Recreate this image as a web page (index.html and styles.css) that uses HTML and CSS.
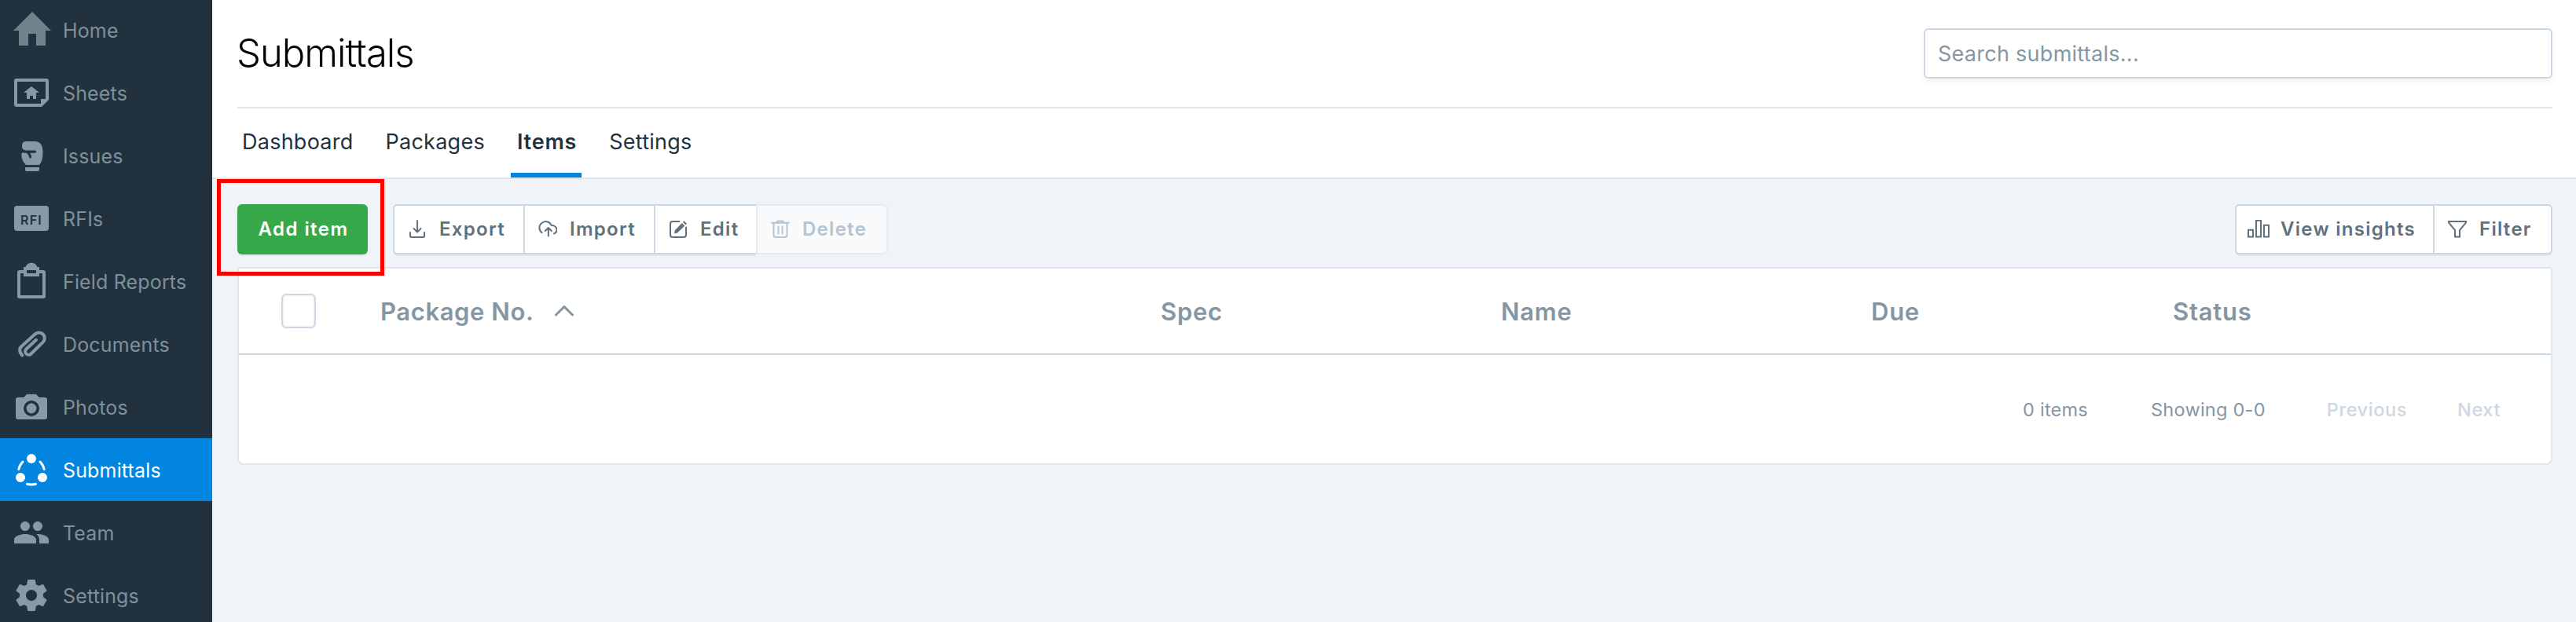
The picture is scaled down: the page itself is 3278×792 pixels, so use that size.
FILE: index.html
```html
<!DOCTYPE html>
<html lang="en">

<head>
    <meta charset="UTF-8">
    <meta name="viewport" content="width=device-width, initial-scale=1.0">
    <title>Submittals</title>
    <link rel="stylesheet" href="styles.css">
</head>

<body>
    <div class="app">
        <nav class="sidebar">
            <a class="nav-item">
                <svg class="nav-icon home-icon" viewBox="0 0 48 48"><path d="M25 1l24 24h-7v19H30V29H20v15H8V25H1z"/></svg>
                <span>Home</span>
            </a>
            <a class="nav-item">
                <svg class="nav-icon" viewBox="0 0 48 48">
                    <path fill-rule="evenodd" d="M5 6h38a3 3 0 0 1 3 3v24l-9 9H5a3 3 0 0 1-3-3V9a3 3 0 0 1 3-3zM6 10v28h30v-6h6V10z"/>
                    <path d="M24 16l10 8h-4v8h-4v-4h-4v4h-4v-8h-4z"/>
                </svg>
                <span>Sheets</span>
            </a>
            <a class="nav-item">
                <svg class="nav-icon" viewBox="0 0 48 48">
                    <path d="M17 6h11c7.5 0 10.5 5 10.5 14 0 6-1 12-4.500 16H17c-4-4-5.700-8.500-5.700-13 0-2 1-3.300 3-3.300h15v-2H18c-4 0-6-2-6-5.700C12 8 14 6 17 6z"/>
                    <path class="cut" d="M14.500 19.200h14M19.500 20.500c2 1.300 3 3 3 5.500"/>
                    <path d="M16 39h18v3a2 2 0 0 1-2 2H18a2 2 0 0 1-2-2z"/>
                </svg>
                <span>Issues</span>
            </a>
            <a class="nav-item">
                <span class="nav-icon"><span class="rfi-badge">RFI</span></span>
                <span>RFIs</span>
            </a>
            <a class="nav-item">
                <svg class="nav-icon" viewBox="0 0 48 48">
                    <path fill-rule="evenodd" d="M14 10V6h2.500a8 8 0 0 1 15 0H34v4h5a3 3 0 0 1 3 3v30a3 3 0 0 1-3 3H9a3 3 0 0 1-3-3V13a3 3 0 0 1 3-3zM10 14v28h28V14h-4v4H14v-4zM18 10v4h12v-4z"/>
                </svg>
                <span>Field Reports</span>
            </a>
            <a class="nav-item">
                <svg class="nav-icon" viewBox="0 0 48 48">
                    <path class="line" d="M12.300 38.500C8 34 8.500 29 12 26.500L28.500 11.500A7.200 7.200 0 0 1 38.700 21.700L23.500 36.500A4.300 4.300 0 0 1 17.300 30.500L30 18.800"/>
                </svg>
                <span>Documents</span>
            </a>
            <a class="nav-item">
                <svg class="nav-icon" viewBox="0 0 48 48">
                    <path fill-rule="evenodd" d="M7 12h7.500l3.500-4h12l3.500 4H41a3 3 0 0 1 3 3v22a3 3 0 0 1-3 3H7a3 3 0 0 1-3-3V15a3 3 0 0 1 3-3zM24 16a10 10 0 1 0 0 20a10 10 0 1 0 0-20z"/>
                    <circle cx="24" cy="26" r="6.4"/>
                </svg>
                <span>Photos</span>
            </a>
            <a class="nav-item active">
                <svg class="nav-icon" viewBox="0 0 48 48">
                    <circle cx="24" cy="10" r="6"/>
                    <circle cx="10" cy="34" r="6"/>
                    <circle cx="38" cy="34" r="6"/>
                    <path class="line thin" d="M13 14q-4 4-5.200 9.500M35 14q4 4 5.200 9.500M18.500 42.300q5.500 1.600 11 0"/>
                </svg>
                <span>Submittals</span>
            </a>
            <a class="nav-item">
                <svg class="nav-icon" viewBox="0 0 24 24"><path d="M16 11c1.660 0 2.990-1.340 2.990-3S17.660 5 16 5s-3 1.340-3 3 1.340 3 3 3zm-8 0c1.660 0 2.990-1.340 2.990-3S9.660 5 8 5 5 6.340 5 8s1.340 3 3 3zm0 2c-2.330 0-7 1.170-7 3.500V19h14v-2.500c0-2.330-4.670-3.500-7-3.500zm8 0c-.290 0-.620.020-.970.050 1.160.840 1.970 1.970 1.970 3.450V19h6v-2.500c0-2.330-4.670-3.500-7-3.500z"/></svg>
                <span>Team</span>
            </a>
            <a class="nav-item">
                <svg class="nav-icon" viewBox="0 0 24 24"><path d="M19.430 12.980c.040-.320.070-.640.070-.980s-.030-.660-.070-.980l2.110-1.650c.190-.150.240-.420.120-.640l-2-3.460c-.120-.220-.390-.300-.610-.220l-2.490 1c-.520-.400-1.080-.730-1.690-.980l-.380-2.650C14.460 2.180 14.250 2 14 2h-4c-.250 0-.460.180-.490.420l-.380 2.650c-.610.250-1.170.590-1.690.980l-2.490-1c-.230-.090-.490 0-.610.220l-2 3.460c-.130.220-.070.490.120.640l2.110 1.650c-.040.320-.070.650-.070.980s.030.660.070.980l-2.110 1.650c-.190.150-.240.420-.120.640l2 3.460c.120.220.390.300.610.220l2.490-1c.520.400 1.080.730 1.690.980l.380 2.650c.030.240.240.420.490.420h4c.250 0 .460-.180.490-.420l.380-2.650c.610-.250 1.170-.590 1.690-.980l2.490 1c.230.090.490 0 .610-.220l2-3.460c.120-.220.070-.490-.120-.640l-2.110-1.650zM12 15.500c-1.930 0-3.500-1.570-3.500-3.500s1.570-3.500 3.500-3.500 3.500 1.570 3.500 3.500-1.570 3.500-3.500 3.500z"/></svg>
                <span>Settings</span>
            </a>
        </nav>

        <main class="content">
            <header class="header">
                <div class="title-row">
                    <h1>Submittals</h1>
                    <input class="search" type="text" placeholder="Search submittals...">
                </div>
                <div class="tabs">
                    <a class="tab">Dashboard</a>
                    <a class="tab">Packages</a>
                    <a class="tab selected">Items</a>
                    <a class="tab">Settings</a>
                </div>
            </header>

            <div class="toolbar">
                <div class="add-wrap">
                    <button class="add-button">Add item</button>
                    <div class="highlight"></div>
                </div>
                <div class="button-group">
                    <button class="tool export">
                        <svg viewBox="0 0 24 24"><path d="M12 1v14.500M7.500 11l4.500 4.500 4.500-4.500M3 16v4.500A1.500 1.500 0 0 0 4.500 22h15a1.500 1.500 0 0 0 1.500-1.500V16"/></svg>
                        Export
                    </button>
                    <button class="tool import">
                        <svg viewBox="0 0 24 24"><path d="M4.500 16.300C0 12.500.5 6.500 5 3.500c4.500-3 10-1 11.700 3.500 4-.3 7 2.500 6.800 6.300-.1 2-1.500 3.700-3.500 4.200M12.800 20.500v-10M8.800 14l4-4 4 4"/></svg>
                        Import
                    </button>
                    <button class="tool edit">
                        <svg viewBox="0 0 24 24"><path d="M13.500 2H5a3 3 0 0 0-3 3v14a3 3 0 0 0 3 3h14a3 3 0 0 0 3-3V9.500"/><path class="solid" d="M16.800 4l3.500 3.500L11 16.500 7 17.500l.8-4.300zM18 2.800l1.500-1.600 3.500 3.500-1.600 1.500z"/></svg>
                        Edit
                    </button>
                    <button class="tool delete" disabled>
                        <svg viewBox="0 0 24 24"><path d="M1 3.700h22M7.500 3.200l1-1.700h7l1 1.700M3.500 4v15a3 3 0 0 0 3 3h11a3 3 0 0 0 3-3V4M9.500 8.500v9M14.500 8.500v9"/></svg>
                        Delete
                    </button>
                </div>
                <div class="button-group right">
                    <button class="tool insights">
                        <svg viewBox="0 0 28 24"><path d="M1 12.800h6v8.700H1zM11 .8h6v20.700h-6zM21 6.800h6v14.700h-6z"/></svg>
                        View insights
                    </button>
                    <button class="tool filter">
                        <svg viewBox="0 0 24 24"><path d="M1 2h22v1.500l-8 9.500v8.500H9V13L1 3.500z"/></svg>
                        Filter
                    </button>
                </div>
            </div>

            <section class="table">
                <div class="table-head">
                    <div><span class="checkbox"></span></div>
                    <div class="sortable">
                        Package No.
                        <svg viewBox="0 0 24 14"><path d="M1.500 12L12 1.500 22.500 12"/></svg>
                    </div>
                    <div>Spec</div>
                    <div>Name</div>
                    <div>Due</div>
                    <div>Status</div>
                </div>
                <div class="table-footer">
                    <span class="count">0 items</span>
                    <span class="showing">Showing 0-0</span>
                    <a class="page-link">Previous</a>
                    <a class="page-link">Next</a>
                </div>
            </section>
        </main>
    </div>
</body>

</html>
```
FILE: styles.css
```css
* {
    box-sizing: border-box;
}

body {
    margin: 0;
    font-family: Inter, "Liberation Sans", sans-serif;
    background-color: #f0f4f8;
    color: #21323e;
}

.app {
    display: flex;
    height: 792px;
    overflow: hidden;
}

/* Sidebar */
.sidebar {
    flex: 0 0 270px;
    background-color: #21323e;
}

.nav-item {
    display: flex;
    align-items: center;
    gap: 16px;
    height: 80px;
    padding-left: 16px;
    font-size: 25px;
    letter-spacing: 0.15px;
    color: #7f8f9b;
}

.nav-item:first-child {
    height: 78px;
    padding-bottom: 2px;
}

.nav-item span:last-child {
    padding-top: 2px;
}

.nav-item.active {
    background-color: #0285e1;
    color: #fff;
}

.nav-icon {
    display: flex;
    align-items: center;
    justify-content: center;
    width: 48px;
    height: 48px;
    fill: #8799a7;
    overflow: visible;
}

.home-icon {
    fill: #71828c;
}

.active .nav-icon {
    fill: #fff;
}

.nav-icon .line {
    fill: none;
    stroke: #8799a7;
    stroke-width: 4;
    stroke-linecap: round;
}

.nav-icon .thin {
    stroke: #fff;
    stroke-width: 3;
}

.nav-icon .cut {
    fill: none;
    stroke: #21323e;
    stroke-width: 3;
    stroke-linecap: round;
}

.nav-icon .rfi-badge {
    width: 44px;
    height: 32px;
    padding: 0;
    border-radius: 4px;
    background-color: #8799a7;
    color: #21323e;
    font-size: 16px;
    font-weight: 600;
    letter-spacing: 1.2px;
    line-height: 32px;
    text-align: center;
}

/* Header */
.content {
    flex: 1;
}

.header {
    height: 228px;
    padding: 0 30px 0 32px;
    background-color: #fff;
    border-bottom: 2px solid #dfe6ec;
}

.title-row {
    display: flex;
    align-items: center;
    justify-content: space-between;
    height: 138px;
    border-bottom: 2px solid #dfe6ec;
}

h1 {
    margin: 0 0 0 -1px;
    font-size: 49px;
    font-weight: 300;
    letter-spacing: -1px;
    line-height: 64px;
    color: #000;
}

.search {
    width: 800px;
    height: 64px;
    padding: 0 16px;
    border: 2px solid #cbd8e3;
    border-radius: 6px;
    box-shadow: 0 4px 6px rgba(0, 0, 0, 0.06);
    font-family: inherit;
    font-size: 27px;
    letter-spacing: 0.27px;
}

.search::placeholder {
    color: #8496a4;
}

.tabs {
    display: flex;
    gap: 27px;
    margin-left: -2px;
}

.tab {
    height: 88px;
    padding: 0 6px 0 8px;
    font-size: 27px;
    letter-spacing: 0.25px;
    line-height: 86px;
}

.tab.selected {
    border-bottom: 6px solid #0285e1;
    font-weight: 600;
    letter-spacing: 0.8px;
}

/* Toolbar */
.toolbar {
    display: flex;
    padding: 32px 30px 16px 32px;
}

.add-wrap {
    position: relative;
    margin-right: 32px;
}

.add-button {
    width: 166px;
    height: 64px;
    padding: 0 0 1px 2px;
    border: none;
    border-radius: 6px;
    background-color: #37a849;
    box-shadow: 0 2px 0 #e2e7ed;
    color: #fff;
    font-family: inherit;
    font-size: 24px;
    font-weight: 600;
    letter-spacing: 1.45px;
}

.highlight {
    position: absolute;
    top: -32px;
    left: -26px;
    width: 213px;
    height: 123px;
    border: 5px solid #ff0000;
}

.button-group {
    display: flex;
}

.button-group.right {
    margin-left: auto;
}

.tool {
    display: flex;
    align-items: center;
    gap: 16px;
    height: 64px;
    padding: 0 0 1px 17px;
    border: 2px solid #cbd8e3;
    border-right: none;
    background-color: #fff;
    box-shadow: 0 2px 0 #e4e7ec;
    color: #60717e;
    font-family: inherit;
    font-size: 24px;
    font-weight: 600;
    letter-spacing: 1.28px;
    white-space: nowrap;
}

.tool:first-child {
    border-radius: 6px 0 0 6px;
}

.tool:last-child {
    border-right: 2px solid #cbd8e3;
    border-radius: 0 6px 6px 0;
}

.tool svg {
    width: 24px;
    height: 24px;
    fill: none;
    stroke: currentColor;
    stroke-width: 2;
    stroke-linecap: round;
    stroke-linejoin: round;
}

.tool .solid {
    fill: currentColor;
    stroke: none;
}

.export,
.import {
    width: 166px;
}

.edit {
    width: 130px;
}

.tool.delete {
    width: 168px;
    border-color: #e6ebef;
    background-color: #f8fafc;
    box-shadow: none;
    color: #b4c5d1;
}

.insights {
    width: 252px;
}

.tool.insights {
    gap: 14px;
    padding-left: 14px;
}

.tool.insights svg {
    width: 28px;
    stroke-linejoin: miter;
}

.filter {
    width: 152px;
}

.tool.filter svg {
    stroke-linejoin: miter;
}

/* Table */
.table {
    height: 252px;
    margin: 0 30px 0 32px;
    border: 2px solid #dfe6ec;
    border-radius: 4px 4px 8px 8px;
    background-color: #fff;
}

.table-head {
    display: grid;
    grid-template-columns: 180px 993px 433px 471px 384px 1fr;
    align-items: center;
    height: 110px;
    border-bottom: 2px solid #cbd8e3;
    color: #8496a4;
    font-size: 31px;
    font-weight: 600;
    letter-spacing: 0.75px;
}

.checkbox {
    display: block;
    width: 44px;
    height: 44px;
    margin-left: 54px;
    border: 2px solid #cbd8e3;
    border-radius: 6px;
    box-shadow: inset 0 0 3px rgba(0, 0, 0, 0.12);
}

.sortable {
    display: flex;
    align-items: center;
    gap: 27px;
    letter-spacing: 0.6px;
}

.sortable svg {
    width: 24px;
    height: 14px;
    fill: none;
    stroke: #8496a4;
    stroke-width: 3;
    stroke-linecap: round;
}

.table-footer {
    display: flex;
    align-items: center;
    justify-content: flex-end;
    height: 139px;
    padding-right: 64px;
    color: #8496a4;
    font-size: 23.5px;
    letter-spacing: 0.25px;
}

.count {
    margin-right: 80px;
}

.showing {
    margin-right: 78px;
}

.page-link {
    color: #cbd8e3;
    font-weight: 500;
    letter-spacing: 0.6px;
}

.page-link + .page-link {
    margin-left: 64px;
}
```
